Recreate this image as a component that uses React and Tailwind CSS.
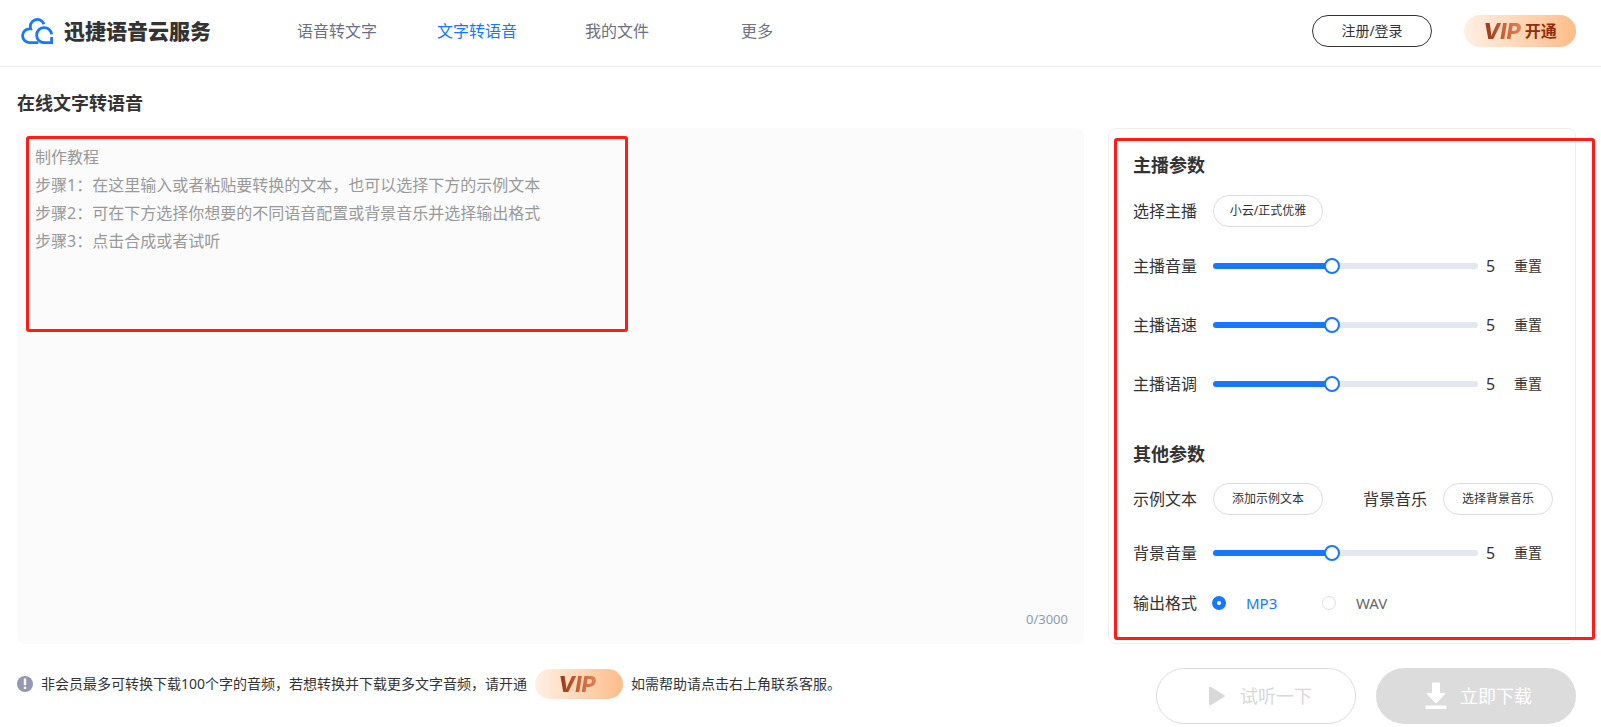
import React, { useState } from "react";
import clsx from "clsx";

const NAV_ITEMS = ["语音转文字", "文字转语音", "我的文件", "更多"];
const MAX_LENGTH = 3000;
const DEFAULT_LEVEL = 5;

const PLACEHOLDER = [
  "制作教程",
  "步骤1：在这里输入或者粘贴要转换的文本，也可以选择下方的示例文本",
  "步骤2：可在下方选择你想要的不同语音配置或背景音乐并选择输出格式",
  "步骤3：点击合成或者试听",
].join("\n");

function CloudLogo() {
  return (
    <svg width="33" height="27" viewBox="0 0 33 27" fill="none" stroke="#1677ff" strokeWidth="2.8" aria-hidden="true">
      <path d="M17.4 24.6H8.4A6.9 6.9 0 0 1 8.6 10.8h1.1A7 7 0 0 1 23 6.2" />
      <path d="M30.6 16.4A7.5 7.5 0 1 0 23 24.6H30.6V18.9" />
    </svg>
  );
}

function VipMark() {
  return (
    <span className="bg-linear-to-r from-[#8f3410] via-[#c9643a] to-[#e08a5c] bg-clip-text pr-1 font-[family-name:Inter] text-[22px] leading-6 font-extrabold text-transparent italic">
      VIP
    </span>
  );
}

function PillButton({ children }) {
  return (
    <button type="button" className="h-8 w-[110px] shrink-0 rounded-full border border-[#dddddd] text-xs">
      {children}
    </button>
  );
}

function LevelRow({ id, label }) {
  const [level, setLevel] = useState(DEFAULT_LEVEL);
  const percent = ((level - 1) / 9) * 100;

  return (
    <div className="flex h-8 items-center">
      <label htmlFor={id} className="mr-4 w-16">{label}</label>
      <input
        id={id}
        type="range"
        min="1"
        max="10"
        value={level}
        onChange={(e) => setLevel(Number(e.target.value))}
        style={{ background: `linear-gradient(to right, #1677ff ${percent}%, #e4e7ef ${percent}%)` }}
        className="h-1.5 w-[265px] appearance-none rounded-full [&::-webkit-slider-thumb]:size-4 [&::-webkit-slider-thumb]:appearance-none [&::-webkit-slider-thumb]:rounded-full [&::-webkit-slider-thumb]:border-2 [&::-webkit-slider-thumb]:border-[#1677ff] [&::-webkit-slider-thumb]:bg-white"
      />
      <span className="ml-2 w-7">{level}</span>
      <button type="button" onClick={() => setLevel(DEFAULT_LEVEL)} className="text-sm">
        重置
      </button>
    </div>
  );
}

function FormatOption({ value, format, onChange }) {
  const checked = value === format;
  return (
    <label className={clsx("flex w-[110px] items-center gap-5 text-[15px]", checked ? "text-[#1677ff]" : "text-[#666666]")}>
      <input
        type="radio"
        name="format"
        checked={checked}
        onChange={() => onChange(value)}
        className="size-3.5 appearance-none rounded-full border border-[#dcdfe6] bg-white checked:border-5 checked:border-[#1677ff]"
      />
      {value}
    </label>
  );
}

// Red frame that points out a region of the page
function Highlight({ className }) {
  return <div className={clsx("pointer-events-none absolute rounded-[3px] border-3 border-[#ff1c12]", className)} />;
}

export default function App() {
  const [text, setText] = useState("");
  const [format, setFormat] = useState("MP3");

  return (
    <div className="min-h-screen bg-white font-['Noto_Sans','Noto_Sans_CJK_SC',sans-serif] text-base text-[#333333]">
      <header className="flex h-[67px] items-start border-b border-[#eeeeee] pr-[25px] pl-[21px]">
        <a href="#" className="mt-[15px] flex w-[246px] items-center gap-2.5 text-[21px] leading-8 font-black">
          <CloudLogo />
          迅捷语音云服务
        </a>
        <nav className="mt-[15px] flex">
          {NAV_ITEMS.map((item) => (
            <a
              key={item}
              href="#"
              className={clsx("w-[140px] text-center leading-8", item === "文字转语音" ? "text-[#1677ff]" : "text-[#6e7183]")}
            >
              {item}
            </a>
          ))}
        </nav>
        <div className="mt-[15px] ml-auto flex gap-8">
          <button type="button" className="h-8 w-[120px] rounded-full border border-[#333333] text-sm">
            注册/登录
          </button>
          <button
            type="button"
            className="flex h-8 w-28 items-center justify-center rounded-full bg-linear-to-r from-[#fff0e4] to-[#ffbd88] font-bold text-[#8f2d0e]"
          >
            <VipMark />
            开通
          </button>
        </div>
      </header>

      <main className="pt-6 pr-[25px] pl-[17px]">
        <h1 className="text-lg leading-6 font-bold">在线文字转语音</h1>

        <div className="mt-[13px] flex gap-6">
          <section className="relative flex flex-1 flex-col rounded-lg bg-[#fbfbfb]">
            <textarea
              aria-label="文本内容"
              value={text}
              maxLength={MAX_LENGTH}
              onChange={(e) => setText(e.target.value)}
              placeholder={PLACEHOLDER}
              className="w-full flex-1 resize-none px-[18px] pt-[15px] leading-7 outline-none placeholder:text-[#999999]"
            />
            <p className="px-4 pb-[17px] text-right text-[13px] leading-4 text-[#8e9bb0]">
              {text.length}/{MAX_LENGTH}
            </p>
            <Highlight className="top-2 left-[9px] h-[196px] w-[602px]" />
          </section>

          <section className="relative w-[468px] rounded-lg border border-[#eeeeee] pt-6 pr-5 pb-6 pl-6">
            <h2 className="text-lg leading-6 font-bold">主播参数</h2>
            <div className="mt-[18px] flex h-8 items-center gap-4">
              <span>选择主播</span>
              <PillButton>小云/正式优雅</PillButton>
            </div>
            <div className="mt-[23px] flex flex-col gap-[27px]">
              <LevelRow id="volume" label="主播音量" />
              <LevelRow id="speed" label="主播语速" />
              <LevelRow id="pitch" label="主播语调" />
            </div>

            <h2 className="mt-[42px] text-lg leading-6 font-bold">其他参数</h2>
            <div className="mt-[17px] mb-[22px] flex h-8 items-center gap-10 whitespace-nowrap">
              <div className="flex items-center gap-4">
                <span>示例文本</span>
                <PillButton>添加示例文本</PillButton>
              </div>
              <div className="flex items-center gap-4">
                <span>背景音乐</span>
                <PillButton>选择背景音乐</PillButton>
              </div>
            </div>
            <LevelRow id="music-volume" label="背景音量" />
            <div role="radiogroup" aria-label="输出格式" className="mt-[18px] flex h-8 items-center">
              <span className="mr-[15px]">输出格式</span>
              <FormatOption value="MP3" format={format} onChange={setFormat} />
              <FormatOption value="WAV" format={format} onChange={setFormat} />
            </div>
            <Highlight className="top-[9px] -right-5 bottom-[3px] left-[5px]" />
          </section>
        </div>

        <footer className="mt-6 flex items-start justify-between">
          <div className="flex h-8 items-center gap-2 text-sm">
            <svg width="16" height="16" viewBox="0 0 16 16" aria-hidden="true">
              <circle cx="8" cy="8" r="8" fill="#9498ae" />
              <path d="M6.8 2.6h2.4v6.6H6.8zM6.8 10.8h2.4v2.2H6.8z" fill="#fff" />
            </svg>
            <span>非会员最多可转换下载100个字的音频，若想转换并下载更多文字音频，请开通</span>
            <button
              type="button"
              className="flex h-[30px] w-22 items-center justify-center rounded-full bg-linear-to-r from-[#fff0e4] to-[#ffbd88]"
            >
              <VipMark />
            </button>
            <span>如需帮助请点击右上角联系客服。</span>
          </div>
          <div className="flex gap-5 text-lg">
            <button
              type="button"
              className="flex h-14 w-50 items-center justify-center gap-2 rounded-full border border-[#dcdcdc] text-[#d8d8d8]"
            >
              <svg width="32" height="32" viewBox="0 0 32 32" fill="#d8d8d8" aria-hidden="true">
                <path d="M9 8.2c0-1.3 1-1.8 2-1.2l13.2 7.9c.9.6.9 1.5 0 2.1L11 25c-1 .6-2 .1-2-1.2z" />
              </svg>
              试听一下
            </button>
            <button
              type="button"
              className="flex h-14 w-50 items-center justify-center gap-2 rounded-full bg-[#dcdcdc] text-white"
            >
              <svg width="32" height="32" viewBox="0 0 32 32" fill="#fff" aria-hidden="true">
                <path d="M12 3.6c0-.6.4-1 1-1h6c.6 0 1 .4 1 1V13h4.2c.9 0 1.2.9.6 1.5l-8 8.2c-.5.5-1.1.5-1.6 0l-8-8.2c-.6-.6-.3-1.5.6-1.5H12z" />
                <rect x="5.5" y="25.5" width="21" height="3.6" rx="1.2" />
              </svg>
              立即下载
            </button>
          </div>
        </footer>
      </main>
    </div>
  );
}
